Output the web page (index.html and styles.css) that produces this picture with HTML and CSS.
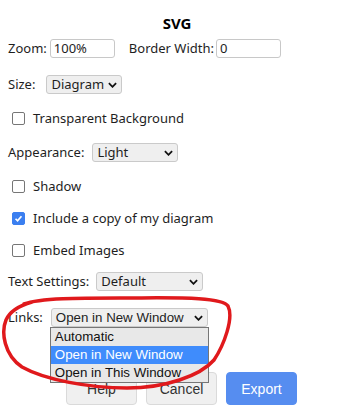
FILE: index.html
```html
<!DOCTYPE html>
<html>
<head>
<meta charset="utf-8">
<link rel="stylesheet" href="styles.css">
</head>
<body>
<div class="dialog">
  <div class="title">SVG</div>
  <div class="row r-zoom">
    <span class="label">Zoom:</span>
    <span class="input w-zoom">100%</span>
    <span class="label lbl-border">Border Width:</span>
    <span class="input w-border">0</span>
  </div>
  <div class="row r-size">
    <span class="label">Size:</span>
    <span class="select s-size"><span class="stext">Diagram</span><svg class="chev" viewBox="0 0 10 6"><path d="M1 1 L5 5 L9 1" /></svg></span>
  </div>
  <div class="row r-check r-transparent">
    <span class="checkbox"></span>
    <span class="label">Transparent Background</span>
  </div>
  <div class="row r-appearance">
    <span class="label">Appearance:</span>
    <span class="select s-appearance"><span class="stext">Light</span><svg class="chev" viewBox="0 0 10 6"><path d="M1 1 L5 5 L9 1" /></svg></span>
  </div>
  <div class="row r-check r-shadow">
    <span class="checkbox"></span>
    <span class="label">Shadow</span>
  </div>
  <div class="row r-check r-include">
    <span class="checkbox checked"><svg viewBox="0 0 13 13"><path d="M3 6.8 L5.4 9.2 L10 3.8" /></svg></span>
    <span class="label">Include a copy of my diagram</span>
  </div>
  <div class="row r-check r-embed">
    <span class="checkbox"></span>
    <span class="label">Embed Images</span>
  </div>
  <div class="row r-text">
    <span class="label">Text Settings:</span>
    <span class="select s-text"><span class="stext">Default</span><svg class="chev" viewBox="0 0 10 6"><path d="M1 1 L5 5 L9 1" /></svg></span>
  </div>
  <div class="row r-links">
    <span class="label">Links:</span>
    <span class="select s-links"><span class="stext arial">Open in New Window</span><svg class="chev" viewBox="0 0 10 6"><path d="M1 1 L5 5 L9 1" /></svg>
      <span class="dropdown">
        <span class="opt">Automatic</span>
        <span class="opt sel">Open in New Window</span>
        <span class="opt">Open in This Window</span>
      </span>
    </span>
  </div>
  <div class="buttons">
    <span class="btn">Help</span>
    <span class="btn">Cancel</span>
    <span class="btn primary">Export</span>
  </div>
  <svg class="scribble" viewBox="0 0 338 420" width="338" height="420">
    <path d="M24 304 C 40 298, 80 298, 120 298 C 170 298, 222 296, 228 306 C 234 318, 224 345, 214 360 C 200 376, 165 388, 127 388 C 90 388, 45 380, 22 367 C 4 355, 1 332, 6 320 C 10 311, 18 306, 32 302" />
  </svg>
</div>
</body>
</html>
```
FILE: styles.css
```css
html, body {
  margin: 0;
  padding: 0;
  background: #ffffff;
}
body {
  width: 338px;
  height: 420px;
  overflow: hidden;
  font-family: "Noto Sans", "Open Sans", sans-serif;
  font-size: 13px;
  color: #1e1e1e;
}
.dialog {
  position: relative;
  width: 338px;
  height: 420px;
  padding: 0 0 0 8px;
  box-sizing: border-box;
}
.title {
  width: 338px;
  text-align: center;
  font-weight: bold;
  font-size: 15px;
  line-height: 20px;
  padding-top: 13px;
  color: #000;
}
.row {
  display: flex;
  align-items: center;
  height: 19px;
  white-space: nowrap;
}
.label {
  line-height: 19px;
}
.input {
  box-sizing: border-box;
  height: 19px;
  border: 1px solid #c8c8c8;
  border-radius: 3px;
  padding: 0 0 0 3px;
  line-height: 17px;
  color: #1e1e1e;
  background: #fff;
}
.w-zoom { width: 65px; margin-left: 3px; }
.lbl-border { margin-left: 14px; }
.w-border { width: 65px; margin-left: 2px; }
.r-zoom { margin-top: 6px; }
.r-size { margin-top: 17px; }
.select {
  position: relative;
  box-sizing: border-box;
  height: 19px;
  display: flex;
  align-items: center;
  justify-content: space-between;
  border: 1px solid #cacaca;
  border-radius: 3px;
  background: #efefef;
  padding: 0 4px 0 4px;
}
.stext { line-height: 17px; color: #1e1e1e; }
.chev {
  width: 9px;
  height: 6px;
  fill: none;
  stroke: #111;
  stroke-width: 2;
}
.s-size { width: 76px; margin-left: 11px; }
.s-appearance { width: 86px; margin-left: 8px; }
.s-text { width: 107px; margin-left: 7px; }
.s-links { width: 157px; margin-left: 8px; }
.r-check { height: 20px; padding-left: 4px; }
.checkbox {
  box-sizing: border-box;
  width: 13px;
  height: 13px;
  border: 1px solid #767676;
  border-radius: 2px;
  background: #fff;
  margin-right: 8px;
  display: flex;
}
.checkbox.checked {
  background: #3b7ff0;
  border-color: #3b7ff0;
}
.checkbox svg {
  width: 11px;
  height: 11px;
  fill: none;
  stroke: #fff;
  stroke-width: 2;
}
.r-transparent { margin-top: 14px; }
.r-appearance { margin-top: 15px; }
.r-shadow { margin-top: 14px; }
.r-include { margin-top: 12px; }
.r-embed { margin-top: 12px; }
.r-text { margin-top: 12px; }
.r-links { margin-top: 17px; }
.arial {
  font-family: "Liberation Sans", Arial, sans-serif;
  font-size: 13.3px;
  color: #222;
}
.dropdown {
  position: absolute;
  left: -2px;
  top: 18px;
  width: 159px;
  box-sizing: border-box;
  border: 1px solid #767676;
  background: #e8e8e8;
  display: flex;
  flex-direction: column;
  z-index: 5;
  font-family: "Liberation Sans", Arial, sans-serif;
  font-size: 13.3px;
  color: #111;
}
.opt {
  height: 18px;
  line-height: 18px;
  padding-left: 4px;
}
.opt.sel {
  background: #3f8cfc;
  color: #fff;
}
.buttons {
  display: flex;
  margin-top: 45px;
  padding-left: 58px;
  gap: 9px;
}
.btn {
  box-sizing: border-box;
  width: 71px;
  height: 33px;
  border: 1px solid #dadada;
  border-radius: 4px;
  background: #f0f0f0;
  display: flex;
  align-items: center;
  justify-content: center;
  font-family: "Liberation Sans", Arial, sans-serif;
  font-size: 14px;
  color: #333;
}
.btn.primary {
  background: #568df0;
  border-color: #568df0;
  color: #fff;
}
.scribble {
  position: absolute;
  left: 0;
  top: 0;
  z-index: 10;
  pointer-events: none;
}
.scribble path {
  fill: none;
  stroke: #e0191c;
  stroke-width: 3.5;
  stroke-linecap: round;
  stroke-linejoin: round;
}
```
